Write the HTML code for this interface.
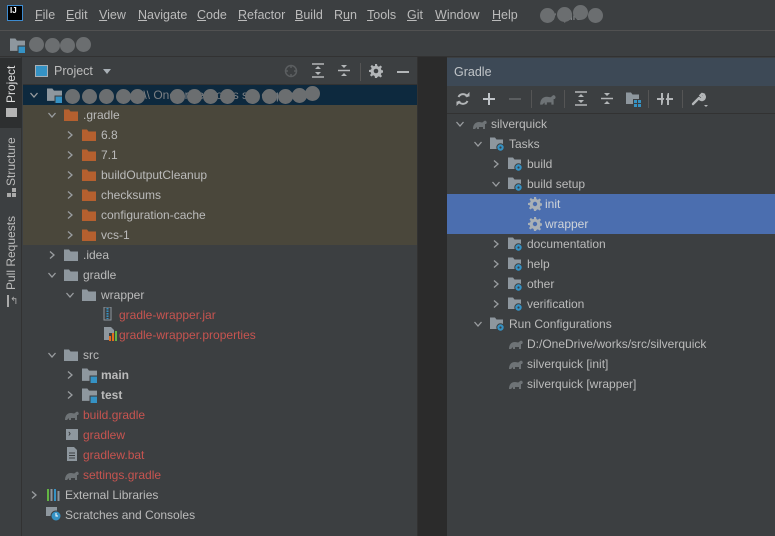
<!DOCTYPE html>
<html><head><meta charset="utf-8"><style>
*{margin:0;padding:0;box-sizing:border-box}
body{width:775px;height:536px;overflow:hidden;background:#3c3f41;font-family:"Liberation Sans","Noto Sans CJK KR",sans-serif;font-size:12px;color:#bbbbbb;position:relative}
.a{position:absolute}
.r{position:absolute;height:20px;line-height:20px;white-space:nowrap}
.red{color:#c75450}
.dot{position:absolute;width:15px;height:15px;border-radius:50%;background:#6b6e70}
u{text-decoration:underline}
.b{font-weight:bold}
</style></head><body>
<svg width="0" height="0" style="position:absolute">
<defs>
<symbol id="chr" viewBox="0 0 10 10"><path d="M3 1.5l4 3.5-4 3.5" fill="none" stroke="#9a9da0" stroke-width="1.3"/></symbol>
<symbol id="chd" viewBox="0 0 10 10"><path d="M1.5 3l3.5 4 3.5-4" fill="none" stroke="#9a9da0" stroke-width="1.3"/></symbol>
<symbol id="fg" viewBox="0 0 14 12"><path d="M0 0.5h5l1.5 2H14V12H0z" fill="#8e979e"/></symbol>
<symbol id="fo" viewBox="0 0 14 12"><path d="M0 0.5h5l1.5 2H14V12H0z" fill="#b5602f"/></symbol>
<symbol id="fm" viewBox="0 0 14 14"><path d="M0 0.5h5l1.5 2H14V12H0z" fill="#8e979e"/><rect x="7" y="7" width="7" height="7" fill="#3c3f41"/><rect x="8" y="8" width="6" height="6" fill="#3592c4"/></symbol>
<symbol id="ft" viewBox="0 0 15 15"><path d="M0 0.5h5l1.5 2H13V12H0z" fill="#8e979e"/><circle cx="10.5" cy="10.5" r="4.2" fill="#3c3f41"/><circle cx="10.5" cy="10.5" r="3.2" fill="#3592c4"/><circle cx="10.5" cy="10.5" r="1.1" fill="#3c3f41"/></symbol>
<symbol id="el" viewBox="0 0 16 12"><path d="M1 11c0-4 2-7 6-7 2 0 3 1 4 0s2-2 3-1 1 2 0 3l-1 0v5h-2v-2h-4v2h-2v-2l-2 2z" fill="#6e7376"/></symbol>
<symbol id="gear" viewBox="0 0 14 14"><path d="M6 0h2l.4 2 1.5.7 1.7-1.2 1.4 1.4-1.2 1.7.7 1.5 2 .4v2l-2 .4-.7 1.5 1.2 1.7-1.4 1.4-1.7-1.2-1.5.7L8 14H6l-.4-2-1.5-.7-1.7 1.2-1.4-1.4 1.2-1.7L1.5 8 0 8V6l2-.4.7-1.5-1.2-1.7 1.4-1.4 1.7 1.2L6 2z" fill="#a9b0b6"/><circle cx="7" cy="7" r="2.2" fill="#4b6eaf"/></symbol>
</defs></svg>

<div class="a" style="left:0;top:0;width:775px;height:31px;background:#3c3f41;border-bottom:1px solid #515151"></div>
<div class="a" style="left:7px;top:5px;width:16px;height:16px;background:#000;border:1px solid #3d8bd0;color:#fff;font-size:8px;font-weight:bold;line-height:10px;padding-left:2px">IJ</div>
<div class="a" style="top:8px;left:35px;font-size:12.5px;white-space:nowrap">
<span style="position:absolute;left:0"><u>F</u>ile</span>
<span style="position:absolute;left:31px"><u>E</u>dit</span>
<span style="position:absolute;left:64px"><u>V</u>iew</span>
<span style="position:absolute;left:103px"><u>N</u>avigate</span>
<span style="position:absolute;left:162px"><u>C</u>ode</span>
<span style="position:absolute;left:203px"><u>R</u>efactor</span>
<span style="position:absolute;left:260px"><u>B</u>uild</span>
<span style="position:absolute;left:299px">R<u>u</u>n</span>
<span style="position:absolute;left:332px"><u>T</u>ools</span>
<span style="position:absolute;left:372px"><u>G</u>it</span>
<span style="position:absolute;left:400px"><u>W</u>indow</span>
<span style="position:absolute;left:457px"><u>H</u>elp</span>
</div>
<span class="a" style="left:550px;top:9px;color:#8a8d90">v  quic</span>
<div class="dot" style="left:540px;top:8px"></div><div class="dot" style="left:557px;top:7px"></div><div class="dot" style="left:573px;top:5px"></div><div class="dot" style="left:588px;top:8px"></div>

<div class="a" style="left:0;top:31px;width:775px;height:26px;background:#3c3f41;border-bottom:1px solid #323232"></div>
<svg class="a" style="left:10px;top:38px" width="15" height="15"><use href="#fm"/></svg>
<div class="dot" style="left:29px;top:37px"></div><div class="dot" style="left:45px;top:38px"></div><div class="dot" style="left:60px;top:38px"></div><div class="dot" style="left:76px;top:37px"></div>

<div class="a" style="left:0;top:57px;width:22px;height:479px;background:#3c3f41;border-right:1px solid #323232"></div>
<div class="a" style="left:0;top:58px;width:22px;height:70px;background:#2d2f30"></div>
<div class="a" style="left:4px;top:103px;transform:rotate(-90deg);transform-origin:0 0;color:#dddddd;white-space:nowrap;width:0"><span style="position:absolute;top:0;left:0;line-height:14px">Project</span></div>
<div class="a" style="left:6px;top:108px;width:11px;height:9px;background:#b5b5b5"></div>
<div class="a" style="left:4px;top:186px;transform:rotate(-90deg);transform-origin:0 0;white-space:nowrap;width:0"><span style="position:absolute;top:0;left:0;line-height:14px">Structure</span></div>
<div class="a" style="left:7px;top:193px;width:4px;height:4px;background:#aaa"></div><div class="a" style="left:12px;top:193px;width:4px;height:4px;background:#aaa"></div><div class="a" style="left:12px;top:188px;width:4px;height:4px;background:#aaa"></div>
<div class="a" style="left:4px;top:290px;transform:rotate(-90deg);transform-origin:0 0;white-space:nowrap;width:0"><span style="position:absolute;top:0;left:0;line-height:14px">Pull Requests</span></div>
<div class="a" style="left:7px;top:295px;width:2px;height:12px;background:#aaa"></div>
<div class="a" style="left:10px;top:297px;color:#aaa;font-size:10px;line-height:10px">↰</div>

<div class="a" style="left:23px;top:57px;width:394px;height:479px;background:#3c3f41"></div>
<div class="a" style="left:23px;top:57px;width:394px;height:28px;border-bottom:1px solid #323232"></div>
<div class="a" style="left:35px;top:65px;width:13px;height:12px;border:1px solid #a9b0b6;background:#3592c4"></div>
<div class="a" style="left:54px;top:64px;font-size:12.5px">Project</div>
<div class="a" style="left:103px;top:69px;width:0;height:0;border-left:4px solid transparent;border-right:4px solid transparent;border-top:5px solid #a9b0b6"></div>
<svg class="a" style="left:284px;top:64px" width="14" height="14"><circle cx="7" cy="7" r="5.5" fill="none" stroke="#5b5e60" stroke-width="1.5"/><path d="M7 1v3M7 10v3M1 7h3M10 7h3" stroke="#5b5e60" stroke-width="1.5"/></svg>
<svg class="a" style="left:311px;top:63px" width="14" height="15"><path d="M1 1h12M1 14h12" stroke="#b3b6b8" stroke-width="1.5"/><path d="M4 6l3-3 3 3zM4 9l3 3 3-3z" fill="#b3b6b8"/></svg>
<svg class="a" style="left:337px;top:63px" width="14" height="15"><path d="M1 7.5h12" stroke="#b3b6b8" stroke-width="1.5"/><path d="M4 2l3 3 3-3zM4 13l3-3 3 3z" fill="#b3b6b8"/></svg>
<div class="a" style="left:360px;top:63px;width:1px;height:18px;background:#555"></div>
<svg class="a" style="left:369px;top:64px" width="14" height="14"><path d="M6 0h2l.4 2 1.5.7 1.7-1.2 1.4 1.4-1.2 1.7.7 1.5 2 .4v2l-2 .4-.7 1.5 1.2 1.7-1.4 1.4-1.7-1.2-1.5.7L8 14H6l-.4-2-1.5-.7-1.7 1.2-1.4-1.4 1.2-1.7L1.5 8 0 8V6l2-.4.7-1.5-1.2-1.7 1.4-1.4 1.7 1.2L6 2z" fill="#b3b6b8"/><circle cx="7" cy="7" r="2.3" fill="#3c3f41"/></svg>
<div class="a" style="left:397px;top:71px;width:12px;height:2px;background:#b3b6b8"></div>

<div class="a" style="left:23px;top:105px;width:394px;height:140px;background:#4a473b"></div>
<div class="a" style="left:23px;top:85px;width:394px;height:20px;background:#0d293e"></div>

<svg class="a" style="left:29px;top:90px" width="10" height="10"><use href="#chd"/></svg>
<svg class="a" style="left:47px;top:88px" width="15" height="15"><use href="#fm"/></svg>
<div class="r" style="left:140px;top:85px;color:#7d8084">:\\ OneDrive works src   erquick</div>
<div class="dot" style="left:65px;top:89px"></div><div class="dot" style="left:82px;top:89px"></div><div class="dot" style="left:99px;top:89px"></div><div class="dot" style="left:116px;top:89px"></div><div class="dot" style="left:130px;top:89px"></div><div class="dot" style="left:170px;top:89px"></div><div class="dot" style="left:187px;top:89px"></div><div class="dot" style="left:203px;top:89px"></div><div class="dot" style="left:220px;top:89px"></div><div class="dot" style="left:245px;top:89px"></div><div class="dot" style="left:262px;top:89px"></div><div class="dot" style="left:278px;top:89px"></div><div class="dot" style="left:292px;top:88px"></div><div class="dot" style="left:305px;top:86px"></div>

<svg class="a" style="left:47px;top:110px" width="10" height="10"><use href="#chd"/></svg>
<svg class="a" style="left:64px;top:109px" width="14" height="12"><use href="#fo"/></svg>
<div class="r" style="left:83px;top:105px">.gradle</div>

<svg class="a" style="left:65px;top:130px" width="10" height="10"><use href="#chr"/></svg>
<svg class="a" style="left:82px;top:129px" width="14" height="12"><use href="#fo"/></svg>
<div class="r" style="left:101px;top:125px">6.8</div>
<svg class="a" style="left:65px;top:150px" width="10" height="10"><use href="#chr"/></svg>
<svg class="a" style="left:82px;top:149px" width="14" height="12"><use href="#fo"/></svg>
<div class="r" style="left:101px;top:145px">7.1</div>
<svg class="a" style="left:65px;top:170px" width="10" height="10"><use href="#chr"/></svg>
<svg class="a" style="left:82px;top:169px" width="14" height="12"><use href="#fo"/></svg>
<div class="r" style="left:101px;top:165px">buildOutputCleanup</div>
<svg class="a" style="left:65px;top:190px" width="10" height="10"><use href="#chr"/></svg>
<svg class="a" style="left:82px;top:189px" width="14" height="12"><use href="#fo"/></svg>
<div class="r" style="left:101px;top:185px">checksums</div>
<svg class="a" style="left:65px;top:210px" width="10" height="10"><use href="#chr"/></svg>
<svg class="a" style="left:82px;top:209px" width="14" height="12"><use href="#fo"/></svg>
<div class="r" style="left:101px;top:205px">configuration-cache</div>
<svg class="a" style="left:65px;top:230px" width="10" height="10"><use href="#chr"/></svg>
<svg class="a" style="left:82px;top:229px" width="14" height="12"><use href="#fo"/></svg>
<div class="r" style="left:101px;top:225px">vcs-1</div>

<svg class="a" style="left:47px;top:250px" width="10" height="10"><use href="#chr"/></svg>
<svg class="a" style="left:64px;top:249px" width="14" height="12"><use href="#fg"/></svg>
<div class="r" style="left:83px;top:245px">.idea</div>
<svg class="a" style="left:47px;top:270px" width="10" height="10"><use href="#chd"/></svg>
<svg class="a" style="left:64px;top:269px" width="14" height="12"><use href="#fg"/></svg>
<div class="r" style="left:83px;top:265px">gradle</div>
<svg class="a" style="left:65px;top:290px" width="10" height="10"><use href="#chd"/></svg>
<svg class="a" style="left:82px;top:289px" width="14" height="12"><use href="#fg"/></svg>
<div class="r" style="left:101px;top:285px">wrapper</div>
<svg class="a" style="left:103px;top:307px" width="10" height="14"><rect x="1" y="0" width="7" height="13" fill="none" stroke="#8e979e"/><path d="M4.5 1v11" stroke="#3592c4" stroke-dasharray="1.5 1" stroke-width="2"/></svg>
<div class="r red" style="left:119px;top:305px">gradle-wrapper.jar</div>
<svg class="a" style="left:103px;top:327px" width="14" height="14"><path d="M1 0h7l3 3v3H6v7H1z" fill="#8e979e"/><rect x="6" y="9" width="2" height="5" fill="#e46d1c"/><rect x="9" y="6" width="2" height="8" fill="#e46d1c"/><rect x="12" y="4" width="2" height="10" fill="#62b543"/></svg>
<div class="r red" style="left:119px;top:325px">gradle-wrapper.properties</div>

<svg class="a" style="left:47px;top:350px" width="10" height="10"><use href="#chd"/></svg>
<svg class="a" style="left:64px;top:349px" width="14" height="12"><use href="#fg"/></svg>
<div class="r" style="left:83px;top:345px">src</div>
<svg class="a" style="left:65px;top:370px" width="10" height="10"><use href="#chr"/></svg>
<svg class="a" style="left:82px;top:368px" width="15" height="15"><use href="#fm"/></svg>
<div class="r b" style="left:101px;top:365px">main</div>
<svg class="a" style="left:65px;top:390px" width="10" height="10"><use href="#chr"/></svg>
<svg class="a" style="left:82px;top:388px" width="15" height="15"><use href="#fm"/></svg>
<div class="r b" style="left:101px;top:385px">test</div>

<svg class="a" style="left:64px;top:409px" width="16" height="12"><use href="#el"/></svg>
<div class="r red" style="left:83px;top:405px">build.gradle</div>
<div class="a" style="left:66px;top:429px;width:12px;height:11px;background:#8e979e"></div>
<div class="a" style="left:68px;top:428px;color:#3c3f41;font-size:9px;font-weight:bold">›</div>
<div class="r red" style="left:83px;top:425px">gradlew</div>
<svg class="a" style="left:67px;top:447px" width="11" height="14"><path d="M0 0h7l3 3v11H0z" fill="#8e979e"/><path d="M2 6h6M2 8.5h6M2 11h6" stroke="#3c3f41"/></svg>
<div class="r red" style="left:83px;top:445px">gradlew.bat</div>
<svg class="a" style="left:64px;top:469px" width="16" height="12"><use href="#el"/></svg>
<div class="r red" style="left:83px;top:465px">settings.gradle</div>

<svg class="a" style="left:29px;top:490px" width="10" height="10"><use href="#chr"/></svg>
<svg class="a" style="left:46px;top:488px" width="15" height="13"><rect x="1" y="1" width="2" height="12" fill="#62b543"/><rect x="4.5" y="1" width="2" height="12" fill="#8e979e"/><rect x="8" y="1" width="2" height="12" fill="#3592c4"/><rect x="11.5" y="3" width="2" height="10" fill="#8e979e"/></svg>
<div class="r" style="left:65px;top:485px">External Libraries</div>
<svg class="a" style="left:46px;top:506px" width="16" height="16"><rect x="0" y="1" width="11" height="9" fill="#8e979e"/><circle cx="10" cy="10" r="5.5" fill="#3c3f41"/><circle cx="10" cy="10" r="4.5" fill="#3592c4"/><path d="M10 7v3h2" stroke="#fff" fill="none"/></svg>
<div class="r" style="left:65px;top:505px">Scratches and Consoles</div>

<div class="a" style="left:417px;top:57px;width:30px;height:479px;background:#2b2b2b;border-left:1px solid #323232"></div>

<div class="a" style="left:447px;top:58px;width:328px;height:478px;background:#3c3f41"></div>
<div class="a" style="left:447px;top:58px;width:328px;height:28px;background:#3d4956"></div>
<div class="r" style="left:454px;top:62px;color:#c0c4c8;font-size:12.5px">Gradle</div>
<div class="a" style="left:447px;top:86px;width:328px;height:28px;border-bottom:1px solid #323232"></div>
<svg class="a" style="left:456px;top:92px" width="14" height="14"><path d="M11.5 5A5 5 0 0 0 2.5 5M2.5 9A5 5 0 0 0 11.5 9" fill="none" stroke="#b3b6b8" stroke-width="2"/><path d="M9 4.5h4.5V0zM5 9.5H0.5V14z" fill="#b3b6b8"/></svg>
<div class="a" style="left:483px;top:98px;width:12px;height:2px;background:#c0c4c8"></div><div class="a" style="left:488px;top:93px;width:2px;height:12px;background:#c0c4c8"></div>
<div class="a" style="left:509px;top:98px;width:12px;height:2px;background:#5b5e60"></div>
<div class="a" style="left:531px;top:90px;width:1px;height:18px;background:#555"></div>
<svg class="a" style="left:539px;top:92px" width="18" height="14"><use href="#el"/></svg>
<div class="a" style="left:564px;top:90px;width:1px;height:18px;background:#555"></div>
<svg class="a" style="left:574px;top:91px" width="14" height="15"><path d="M1 1h12M1 14h12" stroke="#b3b6b8" stroke-width="1.5"/><path d="M4 6l3-3 3 3zM4 9l3 3 3-3z" fill="#b3b6b8"/></svg>
<svg class="a" style="left:600px;top:91px" width="14" height="15"><path d="M1 7.5h12" stroke="#b3b6b8" stroke-width="1.5"/><path d="M4 2l3 3 3-3zM4 13l3-3 3 3z" fill="#b3b6b8"/></svg>
<svg class="a" style="left:626px;top:92px" width="16" height="16"><path d="M0 0.5h5l1.5 2H13V12H0z" fill="#8e979e"/><rect x="7" y="7" width="9" height="9" fill="#3c3f41"/><rect x="8" y="8" width="3" height="3" fill="#3592c4"/><rect x="12" y="8" width="3" height="3" fill="#3592c4"/><rect x="8" y="12" width="3" height="3" fill="#3592c4"/><rect x="12" y="12" width="3" height="3" fill="#3592c4"/></svg>
<div class="a" style="left:648px;top:90px;width:1px;height:18px;background:#555"></div>
<svg class="a" style="left:657px;top:91px" width="16" height="16"><path d="M0 8h16" stroke="#b3b6b8" stroke-width="2"/><path d="M5 2v12M11 2v12" stroke="#b3b6b8" stroke-width="2"/><path d="M10 1L6 15" stroke="#3c3f41" stroke-width="2"/></svg>
<div class="a" style="left:682px;top:90px;width:1px;height:18px;background:#555"></div>
<svg class="a" style="left:691px;top:91px" width="18" height="18"><path d="M2 13l6-6M8 7a3 3 0 1 0 3-4l-1.5 1.5 2 2L13 5a3 3 0 0 1-4 3" stroke="#b3b6b8" stroke-width="2.4" fill="none" stroke-linecap="round"/><path d="M13 14h4l-2 2z" fill="#b3b6b8"/></svg>

<div class="a" style="left:447px;top:194px;width:328px;height:40px;background:#4b6eaf"></div>
<svg class="a" style="left:455px;top:119px" width="10" height="10"><use href="#chd"/></svg>
<svg class="a" style="left:472px;top:118px" width="16" height="12"><use href="#el"/></svg>
<div class="r" style="left:491px;top:114px">silverquick</div>
<svg class="a" style="left:473px;top:139px" width="10" height="10"><use href="#chd"/></svg>
<svg class="a" style="left:490px;top:137px" width="15" height="15"><use href="#ft"/></svg>
<div class="r" style="left:509px;top:134px">Tasks</div>
<svg class="a" style="left:491px;top:159px" width="10" height="10"><use href="#chr"/></svg>
<svg class="a" style="left:508px;top:157px" width="15" height="15"><use href="#ft"/></svg>
<div class="r" style="left:527px;top:154px">build</div>
<svg class="a" style="left:491px;top:179px" width="10" height="10"><use href="#chd"/></svg>
<svg class="a" style="left:508px;top:177px" width="15" height="15"><use href="#ft"/></svg>
<div class="r" style="left:527px;top:174px">build setup</div>
<svg class="a" style="left:528px;top:197px" width="14" height="14"><use href="#gear"/></svg>
<div class="r" style="left:545px;top:194px;color:#d0d4d8">init</div>
<svg class="a" style="left:528px;top:217px" width="14" height="14"><use href="#gear"/></svg>
<div class="r" style="left:545px;top:214px;color:#d0d4d8">wrapper</div>
<svg class="a" style="left:491px;top:239px" width="10" height="10"><use href="#chr"/></svg>
<svg class="a" style="left:508px;top:237px" width="15" height="15"><use href="#ft"/></svg>
<div class="r" style="left:527px;top:234px">documentation</div>
<svg class="a" style="left:491px;top:259px" width="10" height="10"><use href="#chr"/></svg>
<svg class="a" style="left:508px;top:257px" width="15" height="15"><use href="#ft"/></svg>
<div class="r" style="left:527px;top:254px">help</div>
<svg class="a" style="left:491px;top:279px" width="10" height="10"><use href="#chr"/></svg>
<svg class="a" style="left:508px;top:277px" width="15" height="15"><use href="#ft"/></svg>
<div class="r" style="left:527px;top:274px">other</div>
<svg class="a" style="left:491px;top:299px" width="10" height="10"><use href="#chr"/></svg>
<svg class="a" style="left:508px;top:297px" width="15" height="15"><use href="#ft"/></svg>
<div class="r" style="left:527px;top:294px">verification</div>
<svg class="a" style="left:473px;top:319px" width="10" height="10"><use href="#chd"/></svg>
<svg class="a" style="left:490px;top:317px" width="15" height="15"><use href="#ft"/></svg>
<div class="r" style="left:509px;top:314px">Run Configurations</div>
<svg class="a" style="left:508px;top:338px" width="16" height="12"><use href="#el"/></svg>
<div class="r" style="left:527px;top:334px">D:/OneDrive/works/src/silverquick</div>
<svg class="a" style="left:508px;top:358px" width="16" height="12"><use href="#el"/></svg>
<div class="r" style="left:527px;top:354px">silverquick [init]</div>
<svg class="a" style="left:508px;top:378px" width="16" height="12"><use href="#el"/></svg>
<div class="r" style="left:527px;top:374px">silverquick [wrapper]</div>
</body></html>
